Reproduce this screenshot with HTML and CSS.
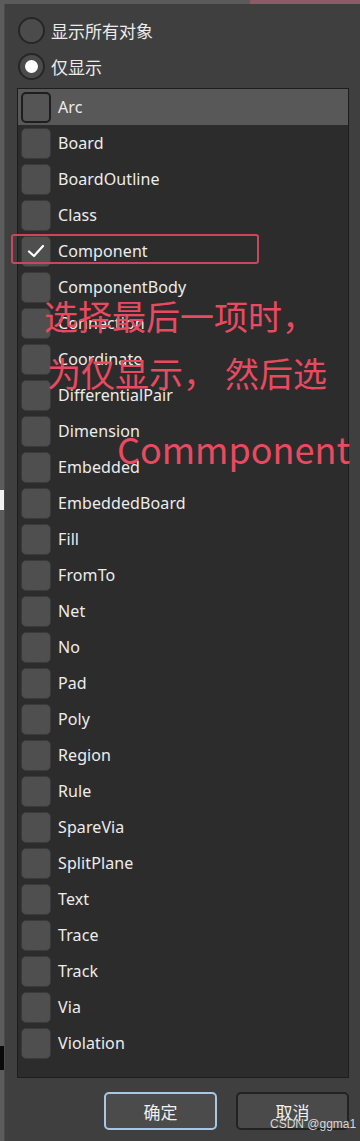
FILE: index.html
```html
<!DOCTYPE html>
<html lang="zh">
<head>
<meta charset="utf-8">
<link rel="stylesheet" href="styles.css">
</head>
<body>
<div class="topbar"><div class="topbar-pink"></div></div>
<div class="main">
  <div class="leftstrip">
    <div class="seg seg-a"></div>
    <div class="seg seg-white"></div>
    <div class="seg seg-b"></div>
    <div class="seg seg-black"></div>
    <div class="seg seg-c"></div>
  </div>
  <div class="dialog">
    <div class="radios">
      <div class="radio-row"><span class="radio"></span><span class="radio-label">显示所有对象</span></div>
      <div class="radio-row"><span class="radio checked"></span><span class="radio-label">仅显示</span></div>
    </div>
    <div class="list">
      <div class="row selected"><span class="cb"></span><span class="label">Arc</span></div>
      <div class="row"><span class="cb"></span><span class="label">Board</span></div>
      <div class="row"><span class="cb"></span><span class="label">BoardOutline</span></div>
      <div class="row"><span class="cb"></span><span class="label">Class</span></div>
      <div class="row"><span class="cb checked"><svg viewBox="0 0 20 16" width="20" height="16"><path d="M3 8.5 L8 13 L17 3" fill="none" stroke="#ffffff" stroke-width="2.2" stroke-linecap="round" stroke-linejoin="round"/></svg></span><span class="label">Component</span></div>
      <div class="row"><span class="cb"></span><span class="label">ComponentBody</span></div>
      <div class="row"><span class="cb"></span><span class="label">Connection</span></div>
      <div class="row"><span class="cb"></span><span class="label">Coordinate</span></div>
      <div class="row"><span class="cb"></span><span class="label">DifferentialPair</span></div>
      <div class="row"><span class="cb"></span><span class="label">Dimension</span></div>
      <div class="row"><span class="cb"></span><span class="label">Embedded</span></div>
      <div class="row"><span class="cb"></span><span class="label">EmbeddedBoard</span></div>
      <div class="row"><span class="cb"></span><span class="label">Fill</span></div>
      <div class="row"><span class="cb"></span><span class="label">FromTo</span></div>
      <div class="row"><span class="cb"></span><span class="label">Net</span></div>
      <div class="row"><span class="cb"></span><span class="label">No</span></div>
      <div class="row"><span class="cb"></span><span class="label">Pad</span></div>
      <div class="row"><span class="cb"></span><span class="label">Poly</span></div>
      <div class="row"><span class="cb"></span><span class="label">Region</span></div>
      <div class="row"><span class="cb"></span><span class="label">Rule</span></div>
      <div class="row"><span class="cb"></span><span class="label">SpareVia</span></div>
      <div class="row"><span class="cb"></span><span class="label">SplitPlane</span></div>
      <div class="row"><span class="cb"></span><span class="label">Text</span></div>
      <div class="row"><span class="cb"></span><span class="label">Trace</span></div>
      <div class="row"><span class="cb"></span><span class="label">Track</span></div>
      <div class="row"><span class="cb"></span><span class="label">Via</span></div>
      <div class="row"><span class="cb"></span><span class="label">Violation</span></div>
    </div>
    <div class="buttons">
      <button class="btn primary">确定</button>
      <button class="btn">取消</button>
    </div>
  </div>
</div>
<div class="mark-box"></div>
<div class="note note1">选择最后一项时，</div>
<div class="note note2">为仅显示，<span class="gap">然后选</span></div>
<div class="note note3">Commponent</div>
<div class="watermark">CSDN @ggma1</div>
</body>
</html>
```
FILE: styles.css
```css
* { box-sizing: border-box; }
html, body { margin: 0; padding: 0; }
body {
  width: 360px;
  height: 1141px;
  overflow: hidden;
  background: #3e3e3e;
  font-family: "Noto Sans", "Open Sans", "Noto Sans CJK SC", sans-serif;
  color: #ececec;
  position: relative;
}
.topbar {
  height: 4px;
  background: #5b5b5b;
  display: flex;
  justify-content: flex-end;
}
.topbar-pink { width: 110px; background: #8c5b67; }
.main {
  display: flex;
  height: 1137px;
}
.leftstrip {
  width: 5px;
  display: flex;
  flex-direction: column;
  border-right: 1px solid #4b4b4b;
}
.seg { background: #5c5c5c; }
.seg-a { height: 486px; }
.seg-white { height: 20px; background: #f2f2f2; }
.seg-b { height: 536px; }
.seg-black { height: 24px; background: #0a0a0a; }
.seg-c { flex: 1; }
.dialog {
  flex: 1;
  background: #3f3f3f;
  padding: 8px 11px 0 12px;
  display: flex;
  flex-direction: column;
}
.radios { display: flex; flex-direction: column; margin-bottom: 4px; }
.radio-row {
  height: 36px;
  display: flex;
  align-items: center;
  gap: 6px;
}
.radio {
  width: 27px;
  height: 27px;
  border-radius: 50%;
  background: #4b4b4b;
  border: 2px solid #262626;
  display: flex;
  align-items: center;
  justify-content: center;
  margin-left: 1px;
}
.radio.checked::after {
  content: "";
  width: 13px;
  height: 13px;
  border-radius: 50%;
  background: #ffffff;
}
.radio-label {
  font-family: "Noto Sans CJK SC", sans-serif;
  font-size: 17px;
  color: #ececec;
}
.list {
  border: 1px solid #1d1d1d;
  background: #2c2c2c;
  padding-bottom: 16px;
  display: flex;
  flex-direction: column;
}
.row {
  height: 36px;
  display: flex;
  align-items: center;
  padding-left: 3px;
  gap: 7px;
}
.row.selected { background: #585858; }
.cb {
  width: 30px;
  height: 31px;
  border-radius: 5px;
  background: #4f4f4f;
  border: 1px solid #3a3a3a;
  display: flex;
  align-items: center;
  justify-content: center;
}
.row.selected .cb { border: 2px solid #1e1e1e; background: #555555; }
.label {
  font-size: 16px;
  color: #ececec;
  letter-spacing: 0.1px;
}
.buttons {
  display: flex;
  justify-content: flex-end;
  gap: 19px;
  margin-top: 14px;
}
.btn {
  width: 113px;
  height: 38px;
  border-radius: 5px;
  background: #4a4a4a;
  border: 2px solid #222222;
  color: #f0f0f0;
  font-family: "Noto Sans CJK SC", sans-serif;
  font-size: 17px;
  padding: 0;
}
.btn.primary { border-color: #a9c6e2; background: #4b4b4b; }
.mark-box {
  position: absolute;
  left: 11px;
  top: 234px;
  width: 248px;
  height: 30px;
  border: 2px solid #c8475a;
  border-radius: 3px;
}
.note {
  position: absolute;
  font-family: "Noto Sans CJK SC", sans-serif;
  color: #ea4a60;
  white-space: nowrap;
  line-height: 1;
}
.note1 { left: 44px; top: 299px; font-size: 34px; }
.note2 { left: 47px; top: 356px; font-size: 34px; }
.note2 .gap { margin-left: 8px; }
.note3 { left: 117px; top: 430px; font-size: 36px; }
.watermark {
  position: absolute;
  left: 270px;
  top: 1117px;
  font-family: "Liberation Sans", sans-serif;
  font-size: 12px;
  color: #d8d8d8;
}
```
